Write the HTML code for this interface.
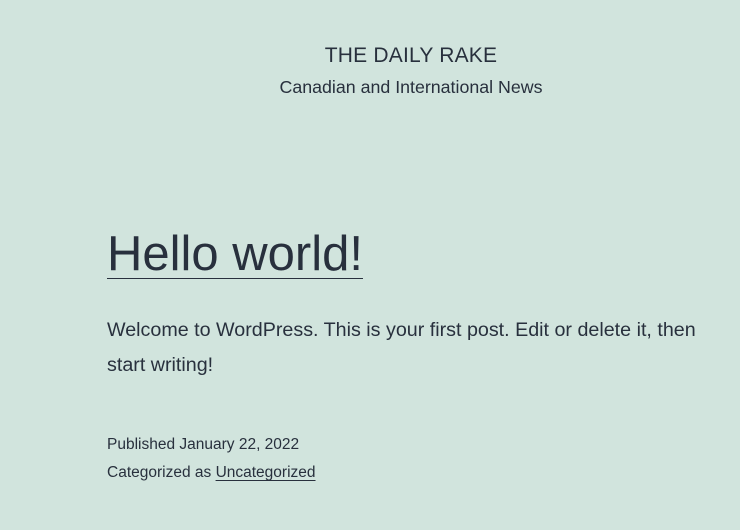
<!DOCTYPE html>
<html><head><meta charset="utf-8"><style>
html,body{margin:0;padding:0;background:#d1e4dd;color:#28303d;font-family:"Liberation Sans",sans-serif;width:740px;height:530px;overflow:hidden}
.h{position:absolute;left:82px;width:658px;text-align:center}
.t{top:41px;font-size:21px;line-height:30px;letter-spacing:0.2px}
.s{top:75px;font-size:17.8px;line-height:24px}
.p{position:absolute;left:107px;white-space:nowrap}
.title{top:225px;font-size:49px;line-height:58px;text-decoration:underline;text-decoration-thickness:1px;text-underline-offset:8px}
.body{top:313px;font-size:19.7px;line-height:35px}
.f{font-size:15.5px;line-height:28px;top:431px}
.f a{color:#28303d;text-decoration:underline;text-underline-offset:3px}
</style></head><body>
<div class="h t">THE DAILY RAKE</div>
<div class="h s">Canadian and International News</div>
<div class="p title">Hello world!</div>
<div class="p body">Welcome to WordPress. This is your first post. Edit or delete it, then<br>start writing!</div>
<div class="p f">Published January 22, 2022<br>Categorized as <a>Uncategorized</a></div>
</body></html>
